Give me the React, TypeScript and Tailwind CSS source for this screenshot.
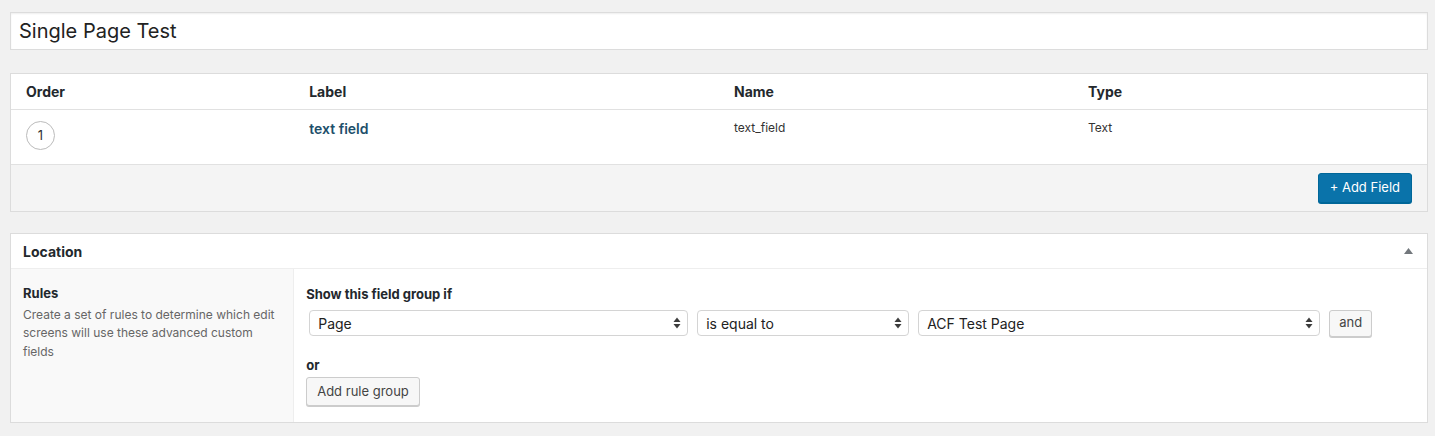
import { useState } from "react";

const font = { fontFamily: "Inter, 'Liberation Sans', sans-serif" };

function SelectArrows() {
  return (
    <svg width="8" height="12" viewBox="0 0 8 12" className="shrink-0">
      <path d="M4 0.5 L7.5 5 H0.5 Z" fill="#3c3c3c" />
      <path d="M4 11.5 L7.5 7 H0.5 Z" fill="#3c3c3c" />
    </svg>
  );
}

function FakeSelect({ value, width }: { value: string; width: string }) {
  return (
    <div
      className={`flex h-[26px] items-center justify-between rounded-[4px] border border-[#d4d4d4] bg-white pl-[8px] pr-[6px] text-[14px] text-[#222] ${width}`}
    >
      <span>{value}</span>
      <SelectArrows />
    </div>
  );
}

const fields = [{ order: 1, label: "text field", name: "text_field", type: "Text" }];

export default function App() {
  const [title, setTitle] = useState("Single Page Test");
  const [open, setOpen] = useState(true);

  return (
    <div className="h-[436px] w-full overflow-hidden bg-[#f1f1f1] pt-[12px]" style={font}>
      <div className="ml-[10px] mr-[7px]">
        <input
          className="block h-[38px] w-full border border-[#dcdcdc] bg-white px-[8px] text-[20px] text-[#222] shadow-[inset_0_1px_2px_rgba(0,0,0,0.07)] outline-none"
          value={title}
          onChange={(e) => setTitle(e.target.value)}
        />

        <section className="mt-[23px] border border-[#dcdcdc] bg-white">
          <div className="flex h-[36px] items-center border-b border-[#e1e1e1] text-[14px] font-bold text-[#23282d]">
            <div className="w-[20%] px-[15px]">Order</div>
            <div className="w-[30%] px-[15px]">Label</div>
            <div className="w-[25%] px-[15px]">Name</div>
            <div className="w-[25%] px-[15px]">Type</div>
          </div>
          {fields.map((f) => (
            <div key={f.name} className="flex h-[55px] border-b border-[#e1e1e1]">
              <div className="w-[20%] px-[15px] pt-[11px]">
                <div className="grid h-[29px] w-[29px] place-items-center rounded-full border border-[#bbb] text-[13px] text-[#333]">
                  {f.order}
                </div>
              </div>
              <div className="w-[30%] px-[15px] pt-[8px] text-[14px] font-semibold text-[#1d4f6b]">{f.label}</div>
              <div className="w-[25%] px-[15px] pt-[9px] text-[12px] text-[#333]">{f.name}</div>
              <div className="w-[25%] px-[15px] pt-[9px] text-[12px] text-[#333]">{f.type}</div>
            </div>
          ))}
          <div className="flex h-[46px] items-center justify-end bg-[#f4f4f4] pr-[15px]">
            <button className="h-[30px] rounded-[3px] border border-[#006799] bg-[#0a73aa] px-[11px] text-[13px] text-white shadow-[0_1px_0_#006799]">
              + Add Field
            </button>
          </div>
        </section>

        <section className="mt-[21px] border border-[#dcdcdc] bg-white">
          <div className="flex h-[35px] items-center justify-between border-b border-[#eee] pl-[12px] pr-[14px]">
            <h2 className="text-[14px] font-bold text-[#23282d]">Location</h2>
            <button onClick={() => setOpen(!open)}>
              <svg width="9" height="6" viewBox="0 0 9 6">
                <path d={open ? "M4.5 0 L9 6 H0 Z" : "M4.5 6 L9 0 H0 Z"} fill="#72777c" />
              </svg>
            </button>
          </div>
          {open && (
            <div className="flex h-[153px]">
              <div className="w-[20%] border-r border-[#eee] bg-[#f9f9f9] px-[12px] pt-[15px]">
                <div className="text-[13px] font-bold text-[#23282d]">Rules</div>
                <p className="mt-[2px] w-[260px] text-[12px] leading-[18.5px] text-[#666]">
                  Create a set of rules to determine which edit screens will use these advanced custom fields
                </p>
              </div>
              <div className="flex-1 px-[12px] pt-[16px]">
                <div className="text-[13px] font-bold text-[#23282d]">Show this field group if</div>
                <div className="mt-[5px] flex items-center gap-[9px] pl-[3px]">
                  <FakeSelect value="Page" width="w-[379px]" />
                  <FakeSelect value="is equal to" width="w-[212px]" />
                  <FakeSelect value="ACF Test Page" width="w-[402px]" />
                  <button className="h-[27px] rounded-[3px] border border-[#ccc] bg-[#f7f7f7] px-[9px] text-[13px] text-[#444] shadow-[0_1px_0_#ccc]">
                    and
                  </button>
                </div>
                <div className="mt-[19px] text-[13px] font-bold text-[#23282d]">or</div>
                <button className="mt-[2px] h-[29px] rounded-[3px] border border-[#ccc] bg-[#f7f7f7] px-[10px] text-[13px] text-[#444] shadow-[0_1px_0_#ccc]">
                  Add rule group
                </button>
              </div>
            </div>
          )}
        </section>
      </div>
    </div>
  );
}
